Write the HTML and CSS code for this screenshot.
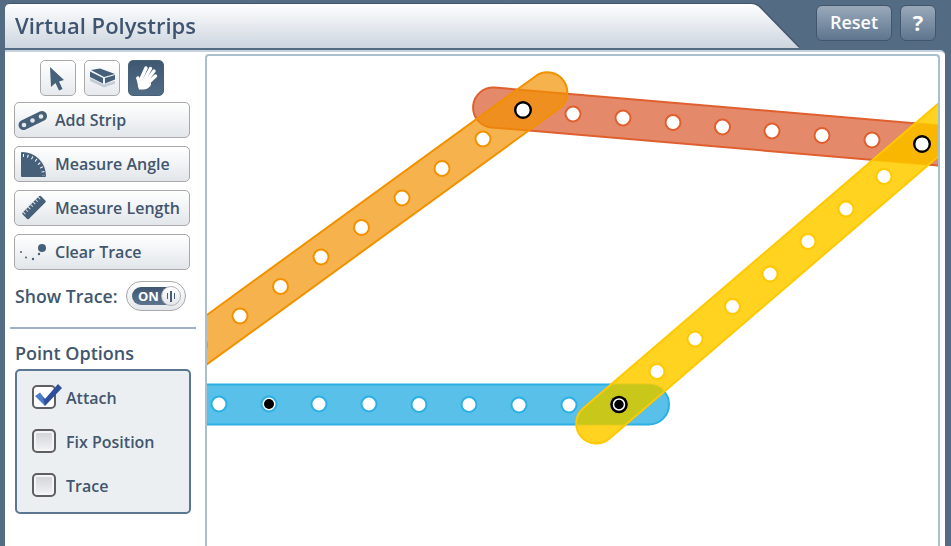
FILE: index.html
```html
<!DOCTYPE html>
<html lang="en">
<head>
  <meta charset="UTF-8" />
  <title>Virtual Polystrips</title>
  <link rel="stylesheet" href="styles.css">
</head>
<body>
  <header class="topbar">
    <div class="tab-edge">
      <div class="tab"><h1>Virtual Polystrips</h1></div>
    </div>
    <div class="top-actions">
      <button class="top-btn reset">Reset</button>
      <button class="top-btn help">?</button>
    </div>
  </header>

  <main class="panel">
    <aside class="sidebar">
      <div class="tools">
        <button class="tool">
          <svg width="36" height="36" viewBox="0 0 36 36"><path class="ink" d="M10 7 L24 20 L19 21.500 L22.500 29 L19 30.500 L15.500 23 L11 27 Z"/></svg>
        </button>
        <button class="tool">
          <svg width="36" height="36" viewBox="0 0 36 36">
            <path d="M6 18 L20 24.500 L31 21 L31 23.500 L20 27.500 L6 21 Z" fill="#c3ccd4"/>
            <path class="ink" d="M7 10 L16 8.500 L31 14 L20 17 Z"/>
            <path class="ink" d="M6 11.500 L19 18 L19 23.500 L6 17 Z"/>
            <path class="ink" d="M21 18 L31 15 L31 19.500 L21 23.500 Z"/>
          </svg>
        </button>
        <button class="tool active">
          <svg width="36" height="36" viewBox="0 0 36 36">
            <g class="hand">
              <line x1="13" y1="19" x2="18" y2="8"/>
              <line x1="16" y1="20" x2="22.500" y2="8.500"/>
              <line x1="19" y1="20" x2="26" y2="11"/>
              <line x1="20" y1="23" x2="27.500" y2="16"/>
              <line x1="12" y1="25" x2="9.800" y2="18"/>
            </g>
            <path d="M9.500 21 L23 18 L23 25 Q20 29.500 15 29.500 L11 29.500 Q9.500 26 9.500 21 Z" fill="#fff"/>
          </svg>
        </button>
      </div>

      <button class="action">
        <svg width="36" height="36" viewBox="0 0 36 36">
          <line x1="9.500" y1="23" x2="28" y2="14" stroke="#46607a" stroke-width="10" stroke-linecap="round"/>
          <circle cx="10" cy="23" r="2.300" fill="#e4e8ec"/><circle cx="18.500" cy="18.500" r="2.300" fill="#e4e8ec"/><circle cx="27" cy="14.500" r="2.300" fill="#e4e8ec"/>
        </svg>
        Add Strip
      </button>
      <button class="action">
        <svg width="36" height="36" viewBox="0 0 36 36">
          <path class="ink" d="M7 7 Q7 6 8 6 A24 24 0 0 1 32 30 Q32 31 31 31 L8 31 Q7 31 7 30 Z"/>
          <path d="M9 9.500 A21 21 0 0 1 29.500 30" fill="none" stroke="#fff" stroke-width="3" stroke-dasharray="1 3.500"/>
        </svg>
        Measure Angle
      </button>
      <button class="action">
        <svg width="36" height="36" viewBox="0 0 36 36">
          <rect class="ink" x="7" y="13" width="26" height="9" rx="1.500" transform="rotate(-45 20 17.500)"/>
          <line x1="10" y1="23.400" x2="26" y2="7.400" stroke="#dfe5ea" stroke-width="3" stroke-dasharray="1 2.500"/>
        </svg>
        Measure Length
      </button>
      <button class="action">
        <svg width="36" height="36" viewBox="0 0 36 36">
          <circle class="ink" cx="7" cy="18" r="1"/><circle class="ink" cx="12" cy="23.500" r="1"/><circle class="ink" cx="19" cy="25" r="1.200"/><circle class="ink" cx="25" cy="20" r="1.200"/><circle class="ink" cx="28" cy="14" r="4"/>
        </svg>
        Clear Trace
      </button>

      <div class="show-trace">
        <span>Show Trace:</span>
        <div class="toggle">
          <div class="toggle-track">
            <span class="toggle-label">ON</span>
            <span class="toggle-knob"><i></i><i></i><i></i></span>
          </div>
        </div>
      </div>

      <hr class="divider">

      <h2>Point Options</h2>
      <div class="options">
        <label class="option">
          <span class="box checked">
            <svg class="tick" width="30" height="28" viewBox="0 0 30 28">
              <path d="M1 13 L6 9.500 L11 16 L11 23 Z" fill="#4a7cc8"/>
              <path d="M11 23 L9 14 L11 16 L24 1 L28 5 Z" fill="#2f4f9c"/>
            </svg>
          </span>
          Attach
        </label>
        <label class="option"><span class="box"></span>Fix Position</label>
        <label class="option"><span class="box"></span>Trace</label>
      </div>
    </aside>

    <section class="canvas">
      <svg class="board" viewBox="207 56 731 490" width="731" height="490">
        <defs>
          <!-- where the yellow strip lies over the blue and red ones -->
          <clipPath id="under-blue"><rect x="-600" y="-20" width="650" height="40" rx="20" transform="translate(619 404.500)"/></clipPath>
          <clipPath id="under-red"><rect x="-50" y="-20" width="600" height="40" rx="20" transform="translate(523 110) rotate(4.870)"/></clipPath>
        </defs>
        <g class="red">
          <rect x="-50" y="-20" width="600" height="40" rx="20" transform="translate(523 110) rotate(4.870)"/>
          <circle cx="573" cy="114" /><circle cx="623" cy="118" /><circle cx="673" cy="122.500" /><circle cx="722.500" cy="127" /><circle cx="772" cy="131" /><circle cx="822" cy="135.500" /><circle cx="872" cy="140" />
        </g>
        <g class="blue">
          <rect x="-600" y="-20" width="650" height="40" rx="20" transform="translate(619 404.500)"/>
          <circle cx="219" cy="404" /><circle cx="269" cy="404" /><circle cx="319" cy="404" /><circle cx="369" cy="404" /><circle cx="419" cy="404.500" /><circle cx="469" cy="404.500" /><circle cx="519" cy="405" /><circle cx="569" cy="405" />
        </g>
        <g class="orange">
          <rect x="-450" y="-20" width="500" height="40" rx="20" transform="translate(523 110) rotate(-36)"/>
          <circle cx="483" cy="139" /><circle cx="442" cy="168.500" /><circle cx="402" cy="198" /><circle cx="361.500" cy="227.500" /><circle cx="321" cy="257" /><circle cx="280.500" cy="286.500" /><circle cx="240" cy="316" /><circle cx="199.500" cy="345" />
        </g>
        <g class="yellow">
          <rect x="-50" y="-20" width="600" height="40" rx="20" transform="translate(619 404) rotate(-40.630)"/>
          <circle cx="884" cy="176.500" /><circle cx="846" cy="209" /><circle cx="808" cy="241.500" /><circle cx="770" cy="274" /><circle cx="732.500" cy="306.500" /><circle cx="695" cy="339" /><circle cx="657" cy="371.500" />
        </g>
        <g clip-path="url(#under-blue)">
          <rect class="overlap-blue" x="-49" y="-19" width="598" height="38" rx="19" transform="translate(619 404) rotate(-40.630)"/>
        </g>
        <g clip-path="url(#under-red)">
          <rect class="overlap-red" x="-49" y="-19" width="598" height="38" rx="19" transform="translate(619 404) rotate(-40.630)"/>
        </g>
        <circle class="dot" cx="269" cy="404"/>
        <circle class="pivot" cx="523" cy="110"/>
        <circle class="pivot" cx="922" cy="144"/>
        <circle class="pivot-back" cx="619" cy="404.500"/>
        <circle class="pivot-ring" cx="619" cy="404.500"/>
      </svg>
    </section>
  </main>
</body>
</html>
```

FILE: styles.css
```css
:root {
  --frame: #536b83;
  --ink: #46607a;
  --text: #42566d;
}

* {
  box-sizing: border-box;
}

html, body {
  height: 100%;
}

body {
  margin: 0;
  width: 951px;
  height: 546px;
  overflow: hidden;
  display: flex;
  flex-direction: column;
  padding: 3px 6px 0 5px;
  background: var(--frame);
  font-family: "Open Sans", sans-serif;
  font-weight: 600;
  color: var(--text);
}

.topbar {
  display: flex;
  height: 47px;
  flex: none;
  justify-content: space-between;
}

.tab-edge {
  filter: drop-shadow(1px -1px 0 #41566c);
}

.tab {
  width: 794px;
  height: 45px;
  padding: 7px 0 0 10px;
  background: linear-gradient(#ffffff, #cdd5df);
  clip-path: path("M0 6 Q0 1 5 1 H746 Q751 1 755 5 L794 45 H0 Z");
}

h1 {
  margin: 0;
  font-size: 22px;
  line-height: 30px;
  font-weight: 600;
  color: #3f556f;
}

.top-actions {
  display: flex;
  gap: 8px;
  padding: 2px 9px 0 0;
}

.top-btn {
  height: 36px;
  border: 1px solid #41566c;
  border-radius: 6px;
  background: linear-gradient(#9aa9ba, #5d758e);
  color: #fff;
  font: 600 18px "Open Sans", sans-serif;
  padding: 0 0 2px;
}

.reset {
  width: 76px;
}

.help {
  width: 36px;
  font-size: 22px;
  font-weight: 700;
}

.panel {
  flex: 1;
  display: flex;
  background: #fff;
  border-top: 2px solid #c6d3de;
  border-radius: 0 5px 0 0;
  min-height: 0;
}

.sidebar {
  width: 200px;
  flex: none;
  padding: 6px 15px 0 9px;
}

.tools {
  display: flex;
  justify-content: center;
  gap: 8px;
  margin: 2px 0 8px;
  height: 36px;
}

button {
  cursor: pointer;
}

.tool {
  width: 36px;
  height: 36px;
  padding: 0;
  border: 1px solid #a9a9a9;
  border-radius: 5px;
  background: linear-gradient(#ffffff, #e6e9ed);
}

.tool svg, .action svg {
  display: block;
}

.tool svg {
  margin: -1px;
}

.tool.active {
  border-color: #46607a;
  background: linear-gradient(#3f5872, #536c86);
}

.ink {
  fill: var(--ink);
}

.hand line {
  stroke: #fff;
  stroke-width: 3.400;
  stroke-linecap: round;
}

.action {
  display: flex;
  align-items: center;
  gap: 5px;
  width: 176px;
  height: 36px;
  margin-bottom: 8px;
  padding: 0;
  border: 1px solid #a9a9a9;
  border-radius: 5px;
  background: linear-gradient(#ffffff, #e2e6ea);
  font: 600 16px "Open Sans", sans-serif;
  color: var(--text);
}

.tools + .action {
  margin-top: -2px;
}

.action svg {
  margin-left: -1px;
  flex: none;
}

.show-trace {
  display: flex;
  align-items: center;
  justify-content: space-between;
  width: 171px;
  height: 30px;
  margin: 11px 0 0 1px;
  font-size: 17.700px;
}

.toggle {
  width: 60px;
  height: 30px;
  padding: 5px;
  border: 1px solid #a9a9a9;
  border-radius: 15px;
  background: linear-gradient(#ffffff, #e3e6ea);
}

.toggle-track {
  display: flex;
  align-items: center;
  justify-content: space-between;
  height: 18px;
  border-radius: 9px;
  padding-left: 6px;
  background: linear-gradient(#3f5872, #5c748d);
}

.toggle-label {
  color: #fff;
  font-size: 13px;
  font-weight: 700;
  line-height: 18px;
}

.toggle-knob {
  display: flex;
  align-items: center;
  justify-content: center;
  gap: 2px;
  width: 20px;
  height: 20px;
  margin-right: -1px;
  border: 1px solid #b5b5b5;
  border-radius: 50%;
  background: linear-gradient(#ffffff, #e3e6ea);
}

.toggle-knob i {
  width: 1.500px;
  height: 6px;
  background: var(--ink);
}

.toggle-knob i:nth-child(2) {
  height: 11px;
}

.divider {
  width: 186px;
  height: 2px;
  margin: 16px 0 0 -4px;
  border: none;
  background: #9fb0c2;
}

h2 {
  margin: 13px 0 4px 1px;
  font-size: 18px;
  line-height: 23px;
  font-weight: 600;
}

.options {
  width: 176px;
  height: 145px;
  margin-left: 1px;
  padding: 14px 0 0 15px;
  background: #eceff2;
  border: 2px solid #5a7690;
  border-radius: 5px;
}

.option {
  display: flex;
  align-items: flex-start;
  gap: 10px;
  height: 24px;
  line-height: 26px;
  margin-bottom: 20px;
  font-size: 16px;
}

.box {
  position: relative;
  width: 24px;
  height: 24px;
  flex: none;
  border: 2px solid #5f5f63;
  border-radius: 5px;
  background: linear-gradient(#d0d2d6, #f2f3f4);
  box-shadow: inset 0 0 0 2px #f4f5f6;
}

.box.checked {
  background: #fff;
  box-shadow: none;
}

.tick {
  position: absolute;
  left: -0.500px;
  top: -4px;
}

.canvas {
  width: 735px;
  margin: 2px 0 0 0;
  border: 2px solid #a7c0cc;
  border-bottom: none;
  border-radius: 4px 4px 0 0;
  overflow: hidden;
  background: #fff;
}

.board {
  display: block;
}

.board circle {
  r: 7.500px;
  fill: #fff;
  stroke-width: 2;
}

.board rect {
  stroke-width: 2;
}

.red rect {
  fill: rgba(217, 92, 48, 0.72);
  stroke: #df5f2e;
}

.red circle {
  stroke: #df5f2e;
}

.orange rect {
  fill: rgba(242, 145, 0, 0.7);
  stroke: #f29100;
}

.orange circle {
  stroke: #f29100;
}

.yellow rect {
  fill: rgba(255, 205, 0, 0.88);
  stroke: #ffc800;
}

.yellow circle {
  stroke: #ffc800;
}

.blue rect {
  fill: rgba(30, 170, 225, 0.74);
  stroke: #2cb0e4;
}

.blue circle {
  stroke: #2cb0e4;
}

.board rect.overlap-blue {
  fill: #c9c71a;
  stroke: none;
}

.board rect.overlap-red {
  fill: rgba(249, 180, 0, 0.85);
  stroke: none;
}

.board circle.dot {
  r: 5px;
  fill: #000;
  stroke: none;
}

.board circle.pivot {
  r: 7.800px;
  fill: #fff;
  stroke: #000;
  stroke-width: 2.400;
}

.board circle.pivot-back {
  r: 8.800px;
  fill: #000;
  stroke: none;
}

.board circle.pivot-ring {
  r: 5.500px;
  fill: #000;
  stroke: #fff;
  stroke-width: 1.500;
}
```
